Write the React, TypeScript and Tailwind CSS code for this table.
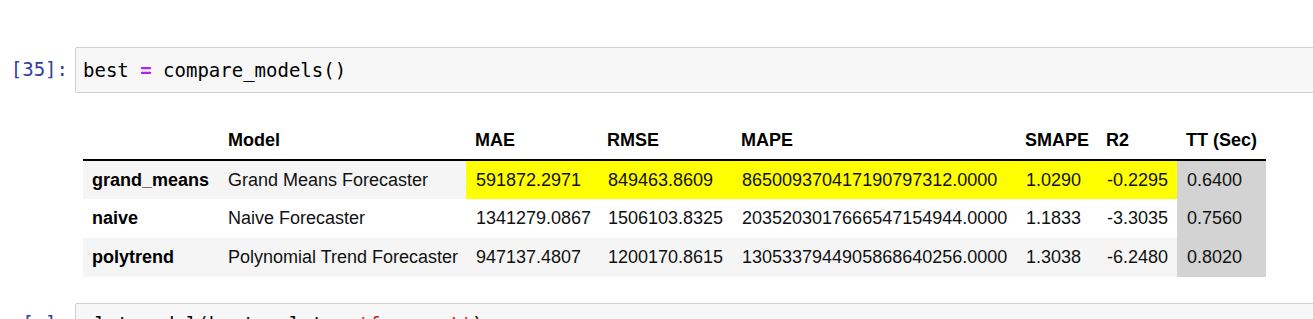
const mono = { fontFamily: '"DejaVu Sans Mono", "Liberation Mono", monospace' };

const headers = ["", "Model", "MAE", "RMSE", "MAPE", "SMAPE", "R2", "TT (Sec)"];
const widths = ["w-[136px]", "w-[247px]", "w-[132px]", "w-[134px]", "w-[284px]", "w-[81px]", "w-[80px]", "w-[89px]"];

const rows = [
  ["grand_means", "Grand Means Forecaster", "591872.2971", "849463.8609", "865009370417190797312.0000", "1.0290", "-0.2295", "0.6400"],
  ["naive", "Naive Forecaster", "1341279.0867", "1506103.8325", "2035203017666547154944.0000", "1.1833", "-3.3035", "0.7560"],
  ["polytrend", "Polynomial Trend Forecaster", "947137.4807", "1200170.8615", "1305337944905868640256.0000", "1.3038", "-6.2480", "0.8020"],
];

function cellBg(r: number, c: number) {
  if (c === 7) return "bg-[#d3d3d3]";
  if (r === 0 && c >= 2) return "bg-[#ffff00]";
  return "";
}

export default function App() {
  return (
    <div className="w-[1313px] h-[319px] overflow-hidden bg-white text-black">
      <div className="h-[47px]" />
      {/* input cell */}
      <div className="flex">
        <div className="w-[75px] shrink-0 pr-[7px] text-right text-[19px] leading-[44px] text-[#303f9f]" style={mono}>
          [35]:
        </div>
        <div
          className="w-[1260px] shrink-0 h-[46px] border border-[#cfcfcf] rounded-[2px] bg-[#f7f7f7] pl-[7px] text-[19px] leading-[44px] whitespace-pre"
          style={mono}
        >
          best <span className="text-[#aa22ff] font-bold">=</span> compare_models()
        </div>
      </div>

      {/* output */}
      <div className="pl-[83px] pt-[29px]" style={{ fontFamily: '"Liberation Sans", Arial, sans-serif' }}>
        <table className="table-fixed border-collapse w-[1183px] text-[18px] text-[#111]">
          <thead>
            <tr className="border-b-2 border-black">
              {headers.map((h, i) => (
                <th key={i} className={`${widths[i]} h-[38px] px-[9px] text-left font-bold align-middle text-black`}>
                  {h}
                </th>
              ))}
            </tr>
          </thead>
          <tbody>
            {rows.map((row, r) => (
              <tr key={r} className={r % 2 === 0 ? "bg-[#f5f5f5]" : "bg-white"}>
                {row.map((v, c) => (
                  <td
                    key={c}
                    className={`h-[39px] px-[9px] whitespace-nowrap align-middle ${c === 0 ? "font-bold text-black" : ""} ${
                      c >= 2 ? "pl-[10px]" : ""
                    } ${cellBg(r, c)}`}
                  >
                    {v}
                  </td>
                ))}
              </tr>
            ))}
          </tbody>
        </table>
      </div>

      {/* next cell */}
      <div className="flex pt-[26px]">
        <div className="w-[75px] shrink-0 pr-[7px] text-right text-[19px] leading-[40px] text-[#303f9f] whitespace-pre" style={mono}>
          [ ]:
        </div>
        <div
          className="w-[1260px] shrink-0 h-[46px] border border-[#cfcfcf] rounded-[2px] bg-[#f7f7f7] pl-[7px] text-[19px] leading-[40px] whitespace-pre"
          style={mono}
        >
          plot_model(best, plot <span className="text-[#aa22ff] font-bold">=</span>{" "}
          <span className="text-[#ba2121]">'forecast'</span>)
        </div>
      </div>
    </div>
  );
}
